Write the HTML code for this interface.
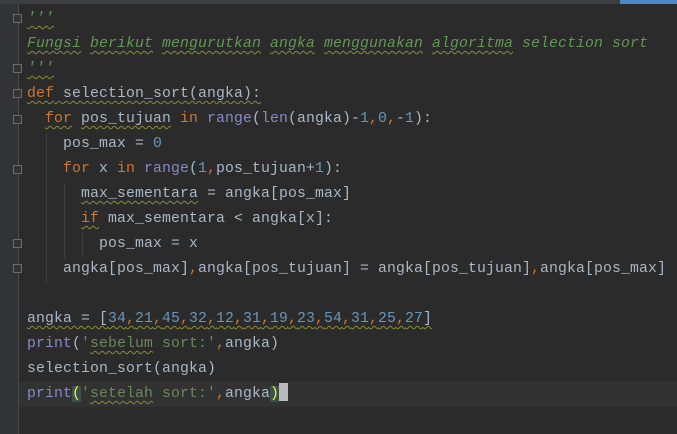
<!DOCTYPE html>
<html><head><style>
html,body{margin:0;padding:0;}
body{width:677px;height:434px;background:#2b2b2b;position:relative;overflow:hidden;font-family:"Liberation Mono",monospace;font-size:14.8px;letter-spacing:0.12px;color:#a9b7c6;}
#top{position:absolute;left:0;top:0;width:677px;height:4px;background:#3c3f41;}
#blue{position:absolute;left:620px;top:0;width:57px;height:4px;background:#4a88c7;}
#gut{position:absolute;left:0;top:4px;width:18px;height:430px;background:#313335;border-right:1px solid #4a4a4a;}
#cur{position:absolute;left:19px;top:382px;width:658px;height:25px;background:#323232;}
#c{position:absolute;left:0;top:2px;width:677px;height:432px;}
.l{position:absolute;left:27px;white-space:pre;height:25px;line-height:25px;}
.k{color:#cc7832}.n{color:#6897bb}.s{color:#6a8759}.d{color:#629755;font-style:italic}.b{color:#8888c6}
.w{text-decoration:underline wavy #8a8a3a;text-decoration-thickness:1px;text-underline-offset:3px}
.g{position:absolute;width:0;border-left:1px solid #3f3f3f;}
.f{position:absolute;left:13px;width:9px;height:9px;border:1px solid #6b6b6b;background:#313335;box-sizing:border-box;}
.bm{background:#3b514d;}
.caret{display:inline-block;width:9px;height:18px;background:#bbbbbb;vertical-align:-4px;}
</style></head><body>
<div id="top"></div><div id="blue"></div>
<div id="gut"></div>
<div id="cur"></div>
<div id="c">
<div class="f" style="top:12px"></div>
<div class="f" style="top:62px"></div>
<div class="f" style="top:87px"></div>
<div class="f" style="top:113px"></div>
<div class="f" style="top:163px"></div>
<div class="f" style="top:237px"></div>
<div class="f" style="top:262px"></div>
<div class="g" style="left:46px;top:131px;height:150px"></div>
<div class="g" style="left:64px;top:181px;height:75px"></div>
<div class="g" style="left:82px;top:231px;height:25px"></div>
<div class="l" style="top:5px"><span class="d w">'''</span></div>
<div class="l" style="top:30px"><span class="d"><span class="w">Fungsi</span> <span class="w">berikut</span> <span class="w">mengurutkan</span> <span class="w">angka</span> <span class="w">menggunakan</span> <span class="w">algoritma</span> selection sort</span></div>
<div class="l" style="top:55px"><span class="d w">'''</span></div>
<div class="l" style="top:80px"><span class="w"><span class="k">def</span> selection_sort(angka):</span></div>
<div class="l" style="top:105px">  <span class="k w">for</span> <span class="w">pos_tujuan</span> <span class="k">in</span> <span class="b">range</span>(<span class="b">len</span>(angka)-<span class="n">1</span><span class="k">,</span><span class="n">0</span><span class="k">,</span>-<span class="n">1</span>):</div>
<div class="l" style="top:130px">    pos_max = <span class="n">0</span></div>
<div class="l" style="top:155px">    <span class="k">for</span> x <span class="k">in</span> <span class="b">range</span>(<span class="n">1</span><span class="k">,</span>pos_tujuan+<span class="n">1</span>):</div>
<div class="l" style="top:180px">      <span class="w">max_sementara</span> = angka[pos_max]</div>
<div class="l" style="top:205px">      <span class="k w">if</span> max_sementara &lt; angka[x]:</div>
<div class="l" style="top:230px">        pos_max = x</div>
<div class="l" style="top:255px">    angka[pos_max]<span class="k">,</span>angka[pos_tujuan] = angka[pos_tujuan]<span class="k">,</span>angka[pos_max]</div>
<div class="l" style="top:305px"><span class="w">angka = [<span class="n">34</span><span class="k">,</span><span class="n">21</span><span class="k">,</span><span class="n">45</span><span class="k">,</span><span class="n">32</span><span class="k">,</span><span class="n">12</span><span class="k">,</span><span class="n">31</span><span class="k">,</span><span class="n">19</span><span class="k">,</span><span class="n">23</span><span class="k">,</span><span class="n">54</span><span class="k">,</span><span class="n">31</span><span class="k">,</span><span class="n">25</span><span class="k">,</span><span class="n">27</span>]</span></div>
<div class="l" style="top:330px"><span class="b">print</span>(<span class="s">'<span class="w">sebelum</span> sort:'</span><span class="k">,</span>angka)</div>
<div class="l" style="top:355px">selection_sort(angka)</div>
<div class="l" style="top:380px"><span class="b">print</span><span class="bm" style="color:#ffef28">(</span><span class="s">'<span class="w">setelah</span> sort:'</span><span class="k">,</span>angka<span class="bm" style="color:#ffef28">)</span><span class="caret"></span></div>
</div>
</body></html>
